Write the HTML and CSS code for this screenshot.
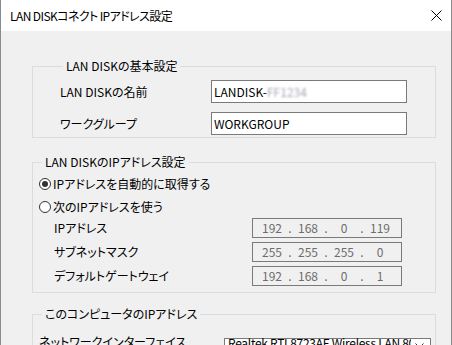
FILE: index.html
```html
<!DOCTYPE html>
<html lang="ja">
<head>
<meta charset="utf-8">
<title>LAN DISKコネクト IPアドレス設定</title>
<link rel="stylesheet" href="styles.css">
</head>
<body>
<div class="window">
  <div class="titlebar">
    <span class="title">LAN DISKコネクト IPアドレス設定</span>
    <span class="close" aria-label="閉じる">
      <svg width="11" height="11" viewBox="0 0 11 11"><path d="M0.5 0.5 L10.5 10.5 M10.5 0.5 L0.5 10.5" stroke="#000" stroke-width="1" fill="none"/></svg>
    </span>
  </div>
  <div class="content">
    <fieldset class="group g1">
      <legend>LAN DISKの基本設定</legend>
      <div class="form">
        <label class="lbl">LAN DISKの名前</label>
        <div class="input">LANDISK-<span class="blur">FF1234</span></div>
        <label class="lbl">ワークグループ</label>
        <div class="input">WORKGROUP</div>
      </div>
    </fieldset>

    <fieldset class="group g2">
      <legend>LAN DISKのIPアドレス設定</legend>
      <div class="radio-row"><span class="radio checked"></span><span>IPアドレスを自動的に取得する</span></div>
      <div class="radio-row r2"><span class="radio"></span><span>次のIPアドレスを使う</span></div>
      <div class="ipgrid">
        <span class="lbl">IPアドレス</span>
        <div class="ipbox"><span>192</span><i>.</i><span>168</span><i>.</i><span>0</span><i>.</i><span>119</span></div>
        <span class="lbl">サブネットマスク</span>
        <div class="ipbox"><span>255</span><i>.</i><span>255</span><i>.</i><span>255</span><i>.</i><span>0</span></div>
        <span class="lbl">デフォルトゲートウェイ</span>
        <div class="ipbox"><span>192</span><i>.</i><span>168</span><i>.</i><span>0</span><i>.</i><span>1</span></div>
      </div>
    </fieldset>

    <fieldset class="group g3">
      <legend>このコンピュータのIPアドレス</legend>
      <div class="nic-row">
        <span class="lbl nic-lbl">ネットワークインターフェイス</span>
        <div class="select"><span class="sel-text">Realtek RTL8723AE Wireless LAN 802.11n PCI-E NIC</span>
          <svg class="chev" width="9" height="5" viewBox="0 0 9 5"><path d="M0.5 0.5 L4.5 4.5 L8.5 0.5" stroke="#333" stroke-width="1" fill="none"/></svg>
        </div>
      </div>
    </fieldset>
  </div>
</div>
</body>
</html>
```

FILE: styles.css
```css
* { box-sizing: border-box; }
html, body {
  margin: 0;
  padding: 0;
  width: 452px;
  height: 345px;
  overflow: hidden;
}
body {
  font-family: "Noto Sans CJK JP", "Noto Sans", sans-serif;
  font-size: 12px;
  line-height: 16px;
  color: #000;
  font-feature-settings: "palt";
  background: #f0f0f0;
}
.window {
  width: 452px;
  height: 345px;
  border-left: 1px solid #8a8a8a;
  border-right: 1px solid #8a8a8a;
  background: #f0f0f0;
  overflow: hidden;
}
.titlebar {
  height: 31px;
  background: #fff;
  display: flex;
  align-items: center;
  justify-content: space-between;
  padding: 0 9px 0 9px;
}
.title {
  font-size: 12px;
  padding-top: 1px;
  letter-spacing: -0.6px;
}
.close {
  display: flex;
  width: 11px;
  height: 11px;
}
.content {
  padding: 27px 0 0 31px;
}
.group {
  margin: 0;
  padding: 0;
  width: 404px;
  border: 1px solid #dcdcdc;
  min-inline-size: 0;
}
.group legend {
  margin-left: 3px;
  padding: 0 3px;
  line-height: 16px;
}
.g1 { padding: 6px 0 2px 27px; }
.form {
  display: grid;
  grid-template-columns: 151px 196px;
  row-gap: 9px;
  align-items: center;
}
.input {
  height: 23px;
  border: 1px solid #7a7a7a;
  background: #fff;
  padding: 0 2px;
  display: flex;
  align-items: center;
}
.blur {
  color: #a8a8b8;
  filter: blur(1.2px);
}
.g2 {
  margin-top: 16px;
  padding: 6px 0 6px 6px;
}
.radio-row {
  display: flex;
  align-items: center;
  height: 16px;
  gap: 2px;
}
.r2 { margin-top: 7px; }
.radio {
  width: 12px;
  height: 12px;
  border: 1px solid #333;
  border-radius: 50%;
  background: #fff;
  display: flex;
  align-items: center;
  justify-content: center;
}
.radio.checked::after {
  content: "";
  width: 6px;
  height: 6px;
  border-radius: 50%;
  background: #333;
}
.ipgrid {
  margin-top: 3px;
  padding-left: 15px;
  display: grid;
  grid-template-columns: 198px 150px;
  row-gap: 4px;
  align-items: center;
}
.ipbox {
  height: 20px;
  border: 1px solid #7a7a7a;
  background: #f0f0f0;
  color: #6d6d6d;
  display: flex;
  align-items: center;
  padding-left: 5px;
}
.ipbox span {
  width: 28px;
  text-align: center;
}
.ipbox i {
  font-style: normal;
  width: 8px;
  text-align: center;
}
.g3 {
  margin-top: 13px;
  padding: 16px 0 6px 6px;
}
.nic-row {
  display: flex;
  align-items: flex-start;
}
.nic-lbl {
  width: 185px;
  line-height: 12px;
  margin-top: -2px;
}
.select {
  width: 207px;
  height: 22px;
  border: 1px solid #7a7a7a;
  background: #fff;
  display: flex;
  align-items: flex-start;
  padding: 0 6px 0 3px;
  gap: 4px;
}
.sel-text {
  flex: 1;
  overflow: hidden;
  white-space: nowrap;
  letter-spacing: -0.3px;
  line-height: 12px;
  margin-top: -2px;
  padding-top: 0;
}
.chev { flex: none; margin-top: 4px; }
```
